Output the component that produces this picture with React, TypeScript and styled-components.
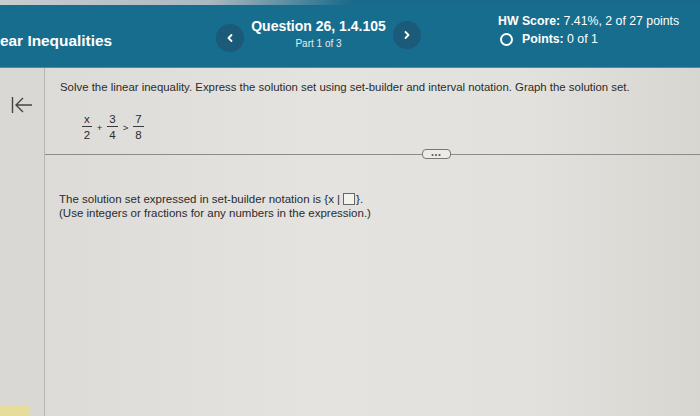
import React from "react";
import styled, { createGlobalStyle } from "styled-components";

const GlobalStyle = createGlobalStyle`
  html, body {
    margin: 0;
    padding: 0;
    background: #dfddd9;
  }
  * {
    box-sizing: border-box;
  }
`;

const Page = styled.div`
  width: 700px;
  height: 416px;
  overflow: hidden;
  display: flex;
  flex-direction: column;
  font-family: "Liberation Sans", Arial, sans-serif;
  background: linear-gradient(90deg, #dcdad6 0%, #e4e3df 45%, #e2e1dd 75%, #d8d6d1 100%);
`;

const TopEdge = styled.div`
  height: 5px;
  background: linear-gradient(90deg, #c9cdd0 0%, #aab9c1 30%, #1a6b8b 50%, #176a8a 100%);
`;

const Header = styled.header`
  height: 63px;
  background: #176d8d;
  border-bottom: 1px solid #4f8aa3;
  display: flex;
  align-items: center;
  color: #fff;
`;

const Title = styled.div`
  width: 216px;
  padding-top: 9px;
  font-size: 15.4px;
  font-weight: bold;
  white-space: nowrap;
`;

const NavButton = styled.div<{ $offset: number }>`
  width: 28px;
  height: 28px;
  flex-shrink: 0;
  border-radius: 50%;
  background: #1c5a7a;
  display: flex;
  align-items: center;
  justify-content: center;
  margin-top: ${(p) => p.$offset}px;
`;

const Question = styled.div`
  width: 149px;
  display: flex;
  flex-direction: column;
  align-items: center;
  margin-top: -6px;
`;

const QuestionTitle = styled.div`
  font-size: 14px;
  font-weight: bold;
`;

const QuestionPart = styled.div`
  font-size: 10px;
  margin-top: 4px;
  color: #e6eef2;
`;

const Score = styled.div`
  margin-left: 77px;
  margin-top: -12px;
  display: flex;
  flex-direction: column;
  gap: 4px;
  font-size: 12.3px;
  white-space: nowrap;
`;

const ScoreRow = styled.div`
  display: flex;
  align-items: center;
  gap: 9px;
`;

const Ring = styled.span`
  width: 13px;
  height: 13px;
  border-radius: 50%;
  border: 2px solid #fff;
  display: inline-block;
  margin-left: 2px;
`;

const Body = styled.div`
  flex: 1;
  display: flex;
`;

const Sidebar = styled.aside`
  width: 45px;
  border-right: 1px solid #b7b5b1;
  display: flex;
  flex-direction: column;
  padding-top: 28px;
  background: #dad8d4;
`;

const BackIcon = styled.div`
  padding-left: 11px;
`;

const SideFooter = styled.div`
  margin-top: auto;
  height: 10px;
  width: 30px;
  background: #e6dc9c;
`;

const Main = styled.main`
  flex: 1;
  display: flex;
  flex-direction: column;
  padding-top: 13px;
  color: #2b2b2b;
`;

const Prompt = styled.p`
  margin: 0 0 0 15px;
  font-size: 11.4px;
  white-space: nowrap;
`;

const Equation = styled.div`
  margin: 20px 0 0 36px;
  display: flex;
  align-items: center;
  gap: 3px;
  font-size: 11.5px;
`;

const Fraction = styled.span`
  display: inline-flex;
  flex-direction: column;
  align-items: center;
  line-height: 12px;
  padding: 0 1px;

  & > span:first-child {
    border-bottom: 1px solid #3a3a3a;
    padding: 0 2px 1px;
  }
  & > span:last-child {
    padding-top: 2px;
  }
`;

const Operator = styled.span`
  font-size: 9.5px;
  padding: 0 1px;
`;

const Divider = styled.div`
  margin-top: 8px;
  display: flex;
  align-items: center;
`;

const Line = styled.div<{ $width?: number }>`
  height: 1px;
  background: #8d8c89;
  ${(p) => (p.$width ? `width: ${p.$width}px;` : "flex: 1;")}
`;

const MorePill = styled.div`
  width: 29px;
  height: 10px;
  border: 1px solid #777;
  border-radius: 4px;
  background: #ecebe7;
  display: flex;
  align-items: center;
  justify-content: center;
  font-size: 7px;
  line-height: 7px;
  letter-spacing: 1px;
  color: #555;
`;

const Answer = styled.div`
  margin: 33px 0 0 14px;
  font-size: 11.5px;
  line-height: 14px;
  white-space: nowrap;
`;

const SetBox = styled.span`
  display: inline-block;
  width: 12px;
  height: 12px;
  border: 1px solid #666;
  vertical-align: -2px;
  margin: 0 1px 0 3px;
  background: #f2f2ef;
`;

const Chevron = ({ dir }: { dir: "left" | "right" }) => (
  <svg width="8" height="10" viewBox="0 0 8 10">
    <path
      d={dir === "left" ? "M5.5 2 L2.5 5 L5.5 8" : "M2.5 2 L5.5 5 L2.5 8"}
      stroke="#fff"
      strokeWidth="1.8"
      fill="none"
      strokeLinecap="round"
      strokeLinejoin="round"
    />
  </svg>
);

const App = () => {
  return (
    <>
      <GlobalStyle />
      <Page>
        <TopEdge />
        <Header>
          <Title>ear Inequalities</Title>
          <NavButton $offset={4}>
            <Chevron dir="left" />
          </NavButton>
          <Question>
            <QuestionTitle>Question 26, 1.4.105</QuestionTitle>
            <QuestionPart>Part 1 of 3</QuestionPart>
          </Question>
          <NavButton $offset={-2}>
            <Chevron dir="right" />
          </NavButton>
          <Score>
            <div>
              <b>HW Score:</b> 7.41%, 2 of 27 points
            </div>
            <ScoreRow>
              <Ring />
              <span>
                <b>Points:</b> 0 of 1
              </span>
            </ScoreRow>
          </Score>
        </Header>
        <Body>
          <Sidebar>
            <BackIcon>
              <svg width="22" height="18" viewBox="0 0 22 18">
                <path d="M1.5 1 V17" stroke="#444" strokeWidth="1.4" />
                <path
                  d="M12 2 L5 9 L12 16 M5 9 H21"
                  stroke="#444"
                  strokeWidth="1.4"
                  fill="none"
                />
              </svg>
            </BackIcon>
            <SideFooter />
          </Sidebar>
          <Main>
            <Prompt>
              Solve the linear inequality. Express the solution set using
              set-builder and interval notation. Graph the solution set.
            </Prompt>
            <Equation>
              <Fraction>
                <span>x</span>
                <span>2</span>
              </Fraction>
              <Operator>+</Operator>
              <Fraction>
                <span>3</span>
                <span>4</span>
              </Fraction>
              <Operator>&gt;</Operator>
              <Fraction>
                <span>7</span>
                <span>8</span>
              </Fraction>
            </Equation>
            <Divider>
              <Line $width={377} />
              <MorePill>•••</MorePill>
              <Line />
            </Divider>
            <Answer>
              The solution set expressed in set-builder notation is {"{"}x |
              <SetBox />
              {"}"}.
              <br />
              (Use integers or fractions for any numbers in the expression.)
            </Answer>
          </Main>
        </Body>
      </Page>
    </>
  );
};

export default App;
